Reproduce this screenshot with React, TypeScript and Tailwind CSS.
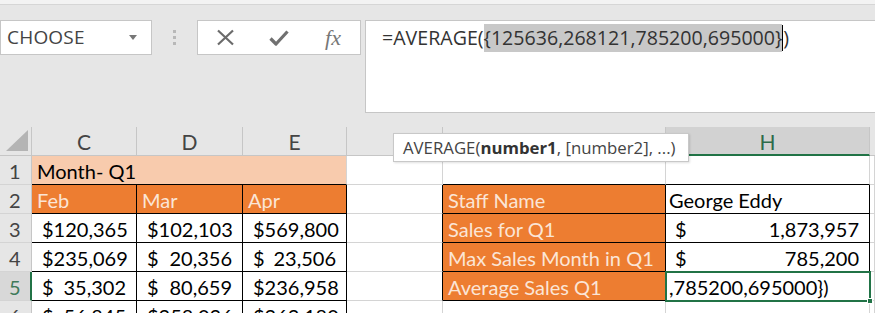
import React from 'react'

const cellFont = { fontFamily: 'Lato, "Open Sans", sans-serif' }

type CellProps = {
  w: string
  className?: string
  children?: React.ReactNode
}

function Cell({ w, className = '', children }: CellProps) {
  return (
    <div className={`${w} h-[29px] shrink-0 flex items-center pt-[2px] overflow-hidden whitespace-nowrap border-r border-b ${className}`}>
      {children}
    </div>
  )
}

function RowHead({ n, active = false }: { n: number; active?: boolean }) {
  return (
    <div
      className={`w-[32px] h-[29px] shrink-0 flex items-center pl-[9px] pt-[2px] border-b border-[#d4d4d4] text-[20px] ${
        active ? 'bg-[#d8d8d8] text-[#3f7a5a] border-r-2 border-r-[#217346]' : 'bg-[#e6e6e6] text-[#444] border-r border-r-[#c6c6c6]'
      }`}
    >
      {n}
    </div>
  )
}

function Money({ v }: { v: string }) {
  return (
    <div className="w-full flex justify-between px-[10px]">
      <span>$</span>
      <span>{v}</span>
    </div>
  )
}

const grid = 'border-[#d4d4d4] bg-white'
const blk = 'border-black bg-white'
const orange = 'bg-[#ed7d31] text-[#fbe5d6] pl-[5px]'

export default function App() {
  const data = [
    ['120,365', '102,103', '569,800'],
    ['235,069', '20,356', '23,506'],
    ['35,302', '80,659', '236,958'],
    ['56,845', '258,036', '262,180'],
  ]

  return (
    <div className="relative w-[875px] h-[313px] overflow-hidden bg-[#e6e6e6]" style={cellFont}>
      {/* top strip */}
      <div className="h-[5px] bg-[#f3f3f3] border-b border-[#d6d6d6]" />

      {/* formula bar */}
      <div className="flex items-start mt-[15px]" style={{ fontFamily: '"Open Sans", "Noto Sans", sans-serif' }}>
        <div className="w-[152px] h-[35px] bg-white border border-[#c6c6c6] flex items-center justify-between pl-[6px] pr-[14px]">
          <span className="text-[19px] text-[#444] tracking-[0.2px]">CHOOSE</span>
          <svg width="8" height="5" viewBox="0 0 8 5">
            <path d="M0 0 L8 0 L4 5 Z" fill="#777" />
          </svg>
        </div>
        <div className="w-[45px] h-[35px] flex flex-col items-center justify-center gap-[3px]">
          <div className="w-[3px] h-[3px] bg-[#b8b8b8]" />
          <div className="w-[3px] h-[3px] bg-[#b8b8b8]" />
          <div className="w-[3px] h-[3px] bg-[#b8b8b8]" />
        </div>
        <div className="w-[164px] h-[35px] bg-white border border-[#c6c6c6] flex">
          <div className="w-[54px] flex items-center justify-center">
            <svg width="19" height="17" viewBox="0 0 19 17">
              <path d="M2 1.5 L17 15.5 M17 1.5 L2 15.5" stroke="#6b6b6b" strokeWidth="2.2" fill="none" />
            </svg>
          </div>
          <div className="w-[54px] flex items-center justify-center">
            <svg width="20" height="16" viewBox="0 0 20 16">
              <path d="M1.5 8.5 L7 14 L18.5 1.5" stroke="#707070" strokeWidth="3.2" fill="none" strokeLinejoin="round" />
            </svg>
          </div>
          <div className="w-[54px] flex items-center justify-center">
            <span className="italic text-[22px] text-[#777] leading-none" style={{ fontFamily: '"Liberation Serif", serif' }}>
              fx
            </span>
          </div>
        </div>
        <div className="ml-[4px] flex-1 h-[93px] bg-white border border-[#c6c6c6] border-r-0 pl-[16px] pt-[3px]">
          <div className="text-[19.6px] leading-[28px] text-[#333] whitespace-nowrap flex items-center">
            <span>=AVERAGE(</span>
            <span className="bg-[#c8c8c8]">{'{125636,268121,785200,695000}'}</span>
            <span className="inline-block w-[1px] h-[26px] bg-black" />
            <span>)</span>
          </div>
        </div>
      </div>

      {/* sheet */}
      <div className="mt-[14px] text-[20px] text-black">
        {/* column headers */}
        <div className="flex h-[29px] text-[#444]">
          <div className="relative w-[32px] h-[29px] shrink-0 border-r border-b border-[#c6c6c6]">
            <svg className="absolute right-[3px] bottom-[4px]" width="22" height="21" viewBox="0 0 22 21">
              <path d="M22 0 L22 21 L0 21 Z" fill="#b4b4b4" />
            </svg>
          </div>
          {[
            ['w-[105px]', 'C'],
            ['w-[106px]', 'D'],
            ['w-[104px]', 'E'],
            ['w-[96px]', ''],
            ['w-[223px]', ''],
          ].map(([w, l], i) => (
            <div key={i} className={`${w} h-[29px] shrink-0 flex items-center justify-center pt-[2px] border-r border-b border-[#c6c6c6] text-[21px]`}>
              {l}
            </div>
          ))}
          <div className="w-[204px] h-[29px] shrink-0 flex items-center justify-center pt-[2px] bg-[#d2d2d2] border-r border-r-[#c6c6c6] border-b-2 border-b-[#217346] text-[#2e6b4a] text-[21px]">
            H
          </div>
          <div className="flex-1 h-[29px] border-b border-[#c6c6c6]" />
        </div>

        {/* row 1 */}
        <div className="flex">
          <RowHead n={1} />
          <div className="w-[315px] h-[29px] shrink-0 flex items-center pt-[2px] pl-[5px] bg-[#f8cbad] border-r border-r-[#d4d4d4] border-b border-b-black">
            Month- Q1
          </div>
          <Cell w="w-[96px]" className={grid} />
          <Cell w="w-[223px]" className="border-r-[#d4d4d4] border-b-black bg-white" />
          <Cell w="w-[204px]" className="border-r-[#d4d4d4] border-b-black bg-white" />
          <Cell w="flex-1" className={grid} />
        </div>

        {/* row 2 */}
        <div className="flex">
          <RowHead n={2} />
          <Cell w="w-[105px]" className={`border-black ${orange}`}>Feb</Cell>
          <Cell w="w-[106px]" className={`border-black ${orange}`}>Mar</Cell>
          <Cell w="w-[104px]" className={`border-black ${orange}`}>Apr</Cell>
          <Cell w="w-[96px]" className="border-r-black border-b-[#d4d4d4] bg-white" />
          <Cell w="w-[223px]" className={`border-black ${orange}`}>Staff Name</Cell>
          <Cell w="w-[204px]" className={`${blk} pl-[3px]`}>George Eddy</Cell>
          <Cell w="flex-1" className={grid} />
        </div>

        {/* rows 3-6 */}
        {data.map((r, i) => {
          const n = i + 3
          return (
            <div key={n} className="flex">
              <RowHead n={n} active={n === 5} />
              <Cell w="w-[105px]" className={blk}><Money v={r[0]} /></Cell>
              <Cell w="w-[106px]" className={blk}><Money v={r[1]} /></Cell>
              <Cell w="w-[104px]" className={blk}><Money v={r[2]} /></Cell>
              {n === 6 ? (
                <>
                  <Cell w="w-[96px]" className={grid} />
                  <Cell w="w-[223px]" className={grid} />
                  <Cell w="w-[204px]" className={grid} />
                </>
              ) : (
                <>
                  <Cell w="w-[96px]" className="border-r-black border-b-[#d4d4d4] bg-white" />
                  <Cell w="w-[223px]" className={`border-black ${orange}`}>
                    {n === 3 ? 'Sales for Q1' : n === 4 ? 'Max Sales Month in Q1' : 'Average Sales Q1'}
                  </Cell>
                  {n === 5 ? (
                    <div className="relative w-[204px] h-[29px] shrink-0 flex items-center pt-[2px] pl-[3px] bg-white border-r border-b border-black overflow-visible whitespace-nowrap">
                      {',785200,695000})'}
                      <div className="absolute -left-[1px] -top-[1px] w-[206px] h-[31px] border-2 border-[#217346]" />
                      <div className="absolute -right-[4px] -bottom-[4px] w-[6px] h-[6px] bg-[#217346] border border-white" />
                    </div>
                  ) : (
                    <Cell w="w-[204px]" className={`${blk} pr-0`}>
                      <div className="w-full flex justify-between pl-[9px] pr-[10px]">
                        <span>$</span>
                        <span>{n === 3 ? '1,873,957' : '785,200'}</span>
                      </div>
                    </Cell>
                  )}
                </>
              )}
              <Cell w="flex-1" className={grid} />
            </div>
          )
        })}
      </div>

      {/* function tooltip */}
      <div
        className="absolute left-[393px] top-[133px] w-[296px] h-[29px] bg-white border border-[#c8c8c8] shadow-[1px_1px_2px_rgba(0,0,0,0.12)] flex items-center pl-[9px] text-[16.8px] text-[#444] whitespace-nowrap"
        style={{ fontFamily: '"Open Sans", "Noto Sans", sans-serif' }}
      >
        AVERAGE(<b className="font-bold text-[#333]">number1</b>, [number2], ...)
      </div>
    </div>
  )
}
